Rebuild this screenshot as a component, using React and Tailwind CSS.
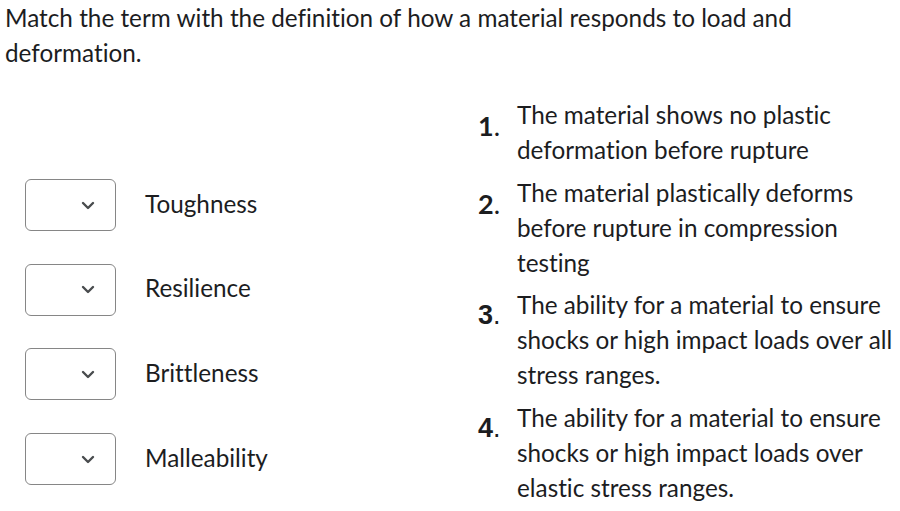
import React from "react";

const terms = ["Toughness", "Resilience", "Brittleness", "Malleability"];

const definitions = [
  { n: "1", font: "lato", lines: ["The material shows no plastic", "deformation before rupture"] },
  { n: "2", font: "lato", lines: ["The material plastically deforms", "before rupture in compression", "testing"] },
  { n: "3", font: "arial", lines: ["The ability for a material to ensure", "shocks or high impact loads over all", "stress ranges."] },
  { n: "4", font: "arial", lines: ["The ability for a material to ensure", "shocks or high impact loads over", "elastic stress ranges."] },
];

function Chevron() {
  return (
    <svg width="14" height="9" viewBox="0 0 14 9" fill="none">
      <path d="M2 2l5 5 5-5" stroke="#494c4e" strokeWidth="2.4" strokeLinecap="round" strokeLinejoin="round" />
    </svg>
  );
}

function SelectBox() {
  return (
    <div className="flex h-[52px] w-[91px] shrink-0 items-center justify-end rounded-[6px] border border-[#868686] bg-white pr-[20px]">
      <Chevron />
    </div>
  );
}

export default function App() {
  return (
    <div
      className="h-[511px] w-[900px] overflow-hidden bg-white text-[#1c1d1f] [font-variant-ligatures:none]"
      style={{ fontFamily: "Lato, 'Noto Sans', sans-serif" }}
    >
      <p className="pl-[5px] text-[24.3px] leading-[35px]">
        Match the term with the definition of how a material responds to load and deformation.
      </p>

      <div className="flex">
        <div className="w-[478px] shrink-0 pl-[25px] pt-[109px]">
          <div className="flex flex-col gap-[32.7px]">
            {terms.map((t) => (
              <div key={t} className="flex items-center gap-[29px]">
                <SelectBox />
                <span className="pb-[4px] text-[24.3px] leading-[35px]">{t}</span>
              </div>
            ))}
          </div>
        </div>

        <div className="flex flex-col gap-[7.5px] pt-[27px]">
          {definitions.map((d) => (
            <div key={d.n} className="flex">
              <div
                className="w-[39px] shrink-0 pt-[11px] text-[27px] font-bold leading-[35px]"
                style={d.font === "arial" ? { fontFamily: "'Liberation Sans', Arial, sans-serif" } : undefined}
              >
                {d.n}
                <span className="font-normal">.</span>
              </div>
              <div className="text-[24.3px] leading-[35px]">
                {d.lines.map((l) => (
                  <div key={l} className="whitespace-nowrap">{l}</div>
                ))}
              </div>
            </div>
          ))}
        </div>
      </div>
    </div>
  );
}
